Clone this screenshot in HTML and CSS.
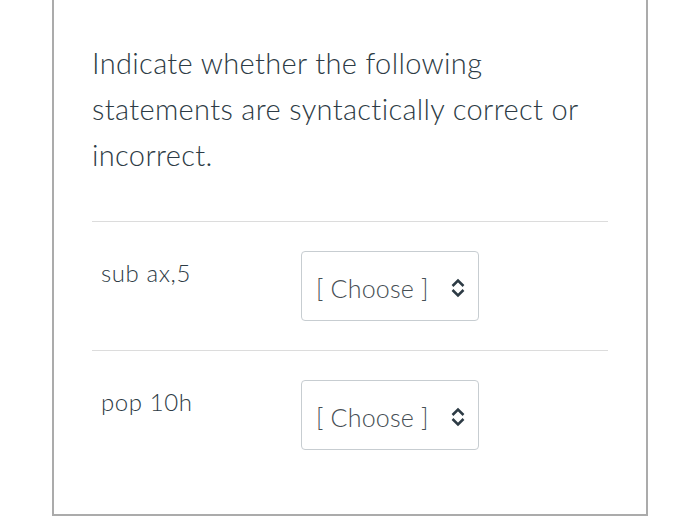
FILE: index.html
```html
<!DOCTYPE html>
<html>
<head>
<meta charset="utf-8">
<link rel="stylesheet" href="styles.css">
</head>
<body>
<div class="panel">
  <p class="question">Indicate whether the following statements are syntactically correct or incorrect.</p>
  <div class="row">
    <div class="label">sub ax,5</div>
    <div class="select">
      <span class="choose">[ Choose ]</span>
      <svg class="chev" width="16" height="20" viewBox="0 0 16 20"><path d="M2.5 8 L8 2.5 L13.5 8 M2.5 12 L8 17.5 L13.5 12" fill="none" stroke="#2d3b45" stroke-width="2.5"/></svg>
    </div>
  </div>
  <div class="row">
    <div class="label">pop 10h</div>
    <div class="select">
      <span class="choose">[ Choose ]</span>
      <svg class="chev" width="16" height="20" viewBox="0 0 16 20"><path d="M2.5 8 L8 2.5 L13.5 8 M2.5 12 L8 17.5 L13.5 12" fill="none" stroke="#2d3b45" stroke-width="2.5"/></svg>
    </div>
  </div>
</div>
</body>
</html>
```
FILE: styles.css
```css
html, body {
  margin: 0;
  padding: 0;
  background: #fff;
}
body {
  font-family: Lato, "Liberation Sans", sans-serif;
  color: #2d3b45;
  width: 700px;
  height: 517px;
  overflow: hidden;
}
.panel {
  margin-left: 52px;
  width: 596px;
  height: 516px;
  border-left: 2px solid #ababab;
  border-right: 2px solid #ababab;
  border-bottom: 2px solid #ababab;
  padding: 0 38px 0 38px;
  box-sizing: border-box;
}
.question {
  margin: 0;
  padding-top: 40px;
  font-size: 29px;
  line-height: 46px;
  font-weight: 300;
  letter-spacing: 0.35px;
  padding-bottom: 43px;
  border-bottom: 1px solid #dcdcdc;
  padding-right: 10px;
}
.row {
  display: flex;
  align-items: flex-start;
  padding: 29px 0 29px 9px;
  border-bottom: 1px solid #dcdcdc;
}
.row:last-child {
  border-bottom: none;
}
.label {
  width: 200px;
  font-size: 24px;
  font-weight: 300;
  letter-spacing: 0.6px;
  line-height: 32px;
  padding-top: 6px;
}
.select {
  box-sizing: border-box;
  width: 178px;
  height: 70px;
  border: 1px solid #c7cdd1;
  border-radius: 4px;
  display: flex;
  align-items: center;
  padding: 3px 12px 0 14px;
  justify-content: space-between;
}
.choose {
  font-size: 25px;
  font-weight: 300;
  letter-spacing: 0.2px;
  color: #474f55;
}
.chev {
  display: block;
}
```
